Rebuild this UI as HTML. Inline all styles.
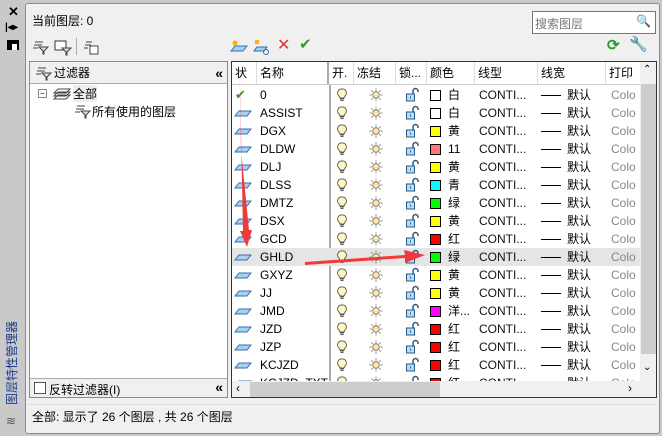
<!DOCTYPE html>
<html><head><meta charset="utf-8"><style>
*{margin:0;padding:0;box-sizing:border-box}
body{width:662px;height:436px;overflow:hidden;background:#c9c9c9;font-family:"Liberation Sans","Noto Sans CJK SC",sans-serif;font-size:12px;color:#000;position:relative}
.a{position:absolute}
#main{left:25px;top:3px;width:635px;height:431px;background:#f0f0f0;border:1px solid #8a8a8a;border-radius:3px}
.box{background:#fff;border:1px solid #828282}
.row{position:absolute;left:0;width:408px;height:18px;line-height:18px;white-space:nowrap}
.row span,.row svg{position:absolute;top:0}
.sw{position:absolute;top:4px;width:11px;height:11px;border:1px solid #000}
.n{left:28px}
.ly{left:2px}
.bulb{left:104px}
.sun{left:135px}
.lk{left:172px}
.cn{left:216px}
.lt{left:247px;color:#111}
.lw{left:309px}
.lw:before{content:"";display:inline-block;width:20px;border-top:1px solid #000;vertical-align:middle;margin-right:6px}
.pr{left:379px;color:#888}
.hd{position:absolute;top:0;height:22px;line-height:22px;border-right:1px solid #ddd;padding-left:3px}
</style></head><body>
<svg width="0" height="0" style="position:absolute">
 <symbol id="ly" viewBox="0 0 18 18"><path d="M5,7 L17,7 L13,12 L1,12 Z" fill="#a8d0f0" stroke="#3a6ea8"/></symbol>
 <symbol id="bu" viewBox="0 0 12 18"><path d="M6,3 a4,4 0 0 1 3,7 L8,12 L4,12 L3,10 a4,4 0 0 1 3,-7 Z" fill="#fff6c0" stroke="#555" stroke-width="0.9"/><path d="M4,13 H8 M4.5,14.5 H7.5" stroke="#555"/></symbol>
 <symbol id="su" viewBox="0 0 18 18"><circle cx="9" cy="9" r="3.3" fill="#ffe8a0" stroke="#666" stroke-width=".8"/><path d="M9,2.5V4.5M9,13.5V15.5M2.5,9H4.5M13.5,9H15.5M4.4,4.4L5.8,5.8M12.2,12.2L13.6,13.6M4.4,13.6L5.8,12.2M12.2,5.8L13.6,4.4" stroke="#888" stroke-width="1"/></symbol>
 <symbol id="lo" viewBox="0 0 18 18"><path d="M9,8 V5 a2.5,2.5 0 0 1 5,0 V6" fill="none" stroke="#2a5a8a" stroke-width="1.5"/><rect x="2.5" y="8" width="8" height="7" fill="#b8dcf4" stroke="#2a5a8a"/><path d="M6.5,10.5V12.5" stroke="#2a5a8a"/></symbol>
 <symbol id="fi" viewBox="0 0 18 18"><path d="M4,4 H12 M3,7 H11 M2,10 H7 M8,9 H17 L13,13 V16 H12 V13 Z" fill="#ddd" stroke="#444"/></symbol>
</svg>
<div class="a" style="left:8px;top:4px;font-weight:bold;font-size:13px">✕</div>
<div class="a" style="left:5px;top:22px;font-size:10px;font-weight:bold">|◂▸</div>
<div class="a" style="left:7px;top:40px;width:12px;height:10px;background:#000;border-top:3px solid #000"><div class="a" style="left:5px;top:1px;width:5px;height:6px;background:#fff"></div></div>
<div class="a" style="left:3px;top:405px;transform:rotate(-90deg);transform-origin:0 0;font-size:12px;color:#1a3a8a;white-space:nowrap">图层特性管理器</div>
<div class="a" style="left:6px;top:414px;color:#555;font-size:12px">≋</div>
<div id="main" class="a">
 <div class="a" style="left:6px;top:8px;font-size:12px">当前图层: 0</div>
 <div class="a box" style="left:506px;top:7px;width:124px;height:23px;border-color:#777"><span class="a" style="left:2px;top:3px;color:#777">搜索图层</span><span class="a" style="right:4px;top:2px;color:#555">🔍</span></div>
 <svg class="a" style="left:5px;top:34px" width="18" height="18"><use href="#fi"/></svg>
 <svg class="a" style="left:28px;top:34px" width="18" height="18"><rect x="1" y="3" width="11" height="9" fill="#fff" stroke="#333"/><path d="M8,10 H17 L13,14 V17 H12 V14 Z" fill="#ddd" stroke="#444"/></svg>
 <div class="a" style="left:50px;top:34px;width:1px;height:17px;background:#aaa"></div>
 <svg class="a" style="left:56px;top:34px" width="18" height="18"><path d="M4,4 H10 M3,7 H9 M2,10 H6" stroke="#444"/><rect x="8" y="8" width="8" height="8" fill="#fff" stroke="#444"/></svg>
 <svg class="a" style="left:204px;top:34px" width="18" height="18"><path d="M5,8 L17,8 L13,13 L1,13 Z" fill="#a8d0f0" stroke="#3a6ea8"/><circle cx="5" cy="5" r="2.5" fill="#ffb000"/></svg>
 <svg class="a" style="left:227px;top:34px" width="18" height="18"><rect x="2" y="2" width="4" height="4" fill="#ffb000"/><path d="M4,9 H14 L11,13 H1 Z" fill="#a8d0f0" stroke="#3a6ea8"/><circle cx="13" cy="14" r="2.5" fill="none" stroke="#3a6ea8"/></svg>
 <div class="a" style="left:251px;top:31px;color:#e03030;font-size:16px">✕</div>
 <div class="a" style="left:273px;top:31px;color:#2a9a2a;font-size:15px">✔</div>
 <div class="a" style="left:581px;top:32px;color:#2a9a2a;font-size:15px;font-weight:bold">⟳</div>
 <div class="a" style="left:603px;top:31px;color:#777;font-size:15px">🔧</div>
 <!-- filter panel -->
 <div class="a box" style="left:3px;top:57px;width:199px;height:337px;border-color:#8a8a8a">
  <div class="a" style="left:0;top:0;width:197px;height:22px;background:#f0f0f0;border-bottom:1px solid #aaa;line-height:22px"><svg class="a" style="left:4px;top:2px" width="18" height="18"><use href="#fi"/></svg><span class="a" style="left:24px;top:0">过滤器</span><span class="a" style="right:4px;top:0;font-weight:bold;font-size:14px">«</span></div>
  <div class="a" style="left:8px;top:27px;width:9px;height:9px;border:1px solid #888;font-size:8px;line-height:7px;text-align:center">−</div>
  <svg class="a" style="left:22px;top:22px" width="20" height="18"><path d="M6,5 H18 L14,9 H2 Z M6,8 H18 L14,12 H2 Z M6,11 H18 L14,15 H2 Z" fill="#fff" stroke="#444"/></svg>
  <div class="a" style="left:43px;top:23px;background:#eee">全部</div>
  <svg class="a" style="left:43px;top:40px" width="18" height="18"><use href="#fi"/></svg>
  <div class="a" style="left:62px;top:41px">所有使用的图层</div>
  <div class="a" style="left:0;top:316px;width:197px;height:19px;background:#f0f0f0;border-top:1px solid #aaa"><div class="a" style="left:4px;top:3px;width:12px;height:12px;border:1px solid #555;background:#fff"></div><span class="a" style="left:19px;top:2px">反转过滤器(I)</span><span class="a" style="right:4px;top:0;font-weight:bold;font-size:14px">«</span></div>
 </div>
 <!-- grid -->
 <div class="a box" style="left:205px;top:57px;width:426px;height:337px;border-color:#333;overflow:hidden">
  <div class="a" style="left:0;top:0;width:408px;height:23px;border-bottom:1px solid #ccc;background:#fff">
   <div class="hd" style="left:0;width:25px">状</div><div class="hd" style="left:25px;width:72px;border-right:2px solid #aaa">名称</div>
   <div class="hd" style="left:97px;width:25px">开.</div><div class="hd" style="left:122px;width:42px">冻结</div>
   <div class="hd" style="left:164px;width:31px">锁...</div><div class="hd" style="left:195px;width:48px">颜色</div>
   <div class="hd" style="left:243px;width:63px">线型</div><div class="hd" style="left:306px;width:68px">线宽</div>
   <div class="hd" style="left:374px;width:40px">打印</div>
  </div>
  <div class="a" style="left:97px;top:23px;width:2px;height:296px;background:#aaa"></div>
  <div class="a" style="left:408px;top:0;width:17px;height:319px;background:#f0f0f0"><div class="a" style="left:3px;top:2px;font-size:10px">⌃</div><div class="a" style="left:1px;top:22px;width:15px;height:270px;background:#cdcdcd"></div><div class="a" style="left:3px;top:300px;font-size:10px">⌄</div></div>
  <div class="a" style="left:0;top:319px;width:425px;height:17px;background:#f0f0f0"><span class="a" style="left:4px;top:0">‹</span><div class="a" style="left:18px;top:1px;width:190px;height:15px;background:#cdcdcd"></div><span class="a" style="left:396px;top:0">›</span></div>
  <div class="a" style="left:0;top:23px;width:408px;height:296px;overflow:hidden">
   <div class="row" style="top:1px"><span style="left:3px;color:#2a9a2a;font-size:13px">✔</span><span class="n">0</span><svg class="bulb" width="12" height="18"><use href="#bu"/></svg><svg class="sun" width="18" height="18"><use href="#su"/></svg><svg class="lk" width="18" height="18"><use href="#lo"/></svg><i class="sw" style="left:198px;background:#fff"></i><span class="cn">白</span><span class="lt">CONTI...</span><span class="lw">默认</span><span class="pr">Colo</span></div>
   <div class="row" style="top:19px"><svg class="ly" width="18" height="18"><use href="#ly"/></svg><span class="n">ASSIST</span><svg class="bulb" width="12" height="18"><use href="#bu"/></svg><svg class="sun" width="18" height="18"><use href="#su"/></svg><svg class="lk" width="18" height="18"><use href="#lo"/></svg><i class="sw" style="left:198px;background:#fff"></i><span class="cn">白</span><span class="lt">CONTI...</span><span class="lw">默认</span><span class="pr">Colo</span></div>
   <div class="row" style="top:37px"><svg class="ly" width="18" height="18"><use href="#ly"/></svg><span class="n">DGX</span><svg class="bulb" width="12" height="18"><use href="#bu"/></svg><svg class="sun" width="18" height="18"><use href="#su"/></svg><svg class="lk" width="18" height="18"><use href="#lo"/></svg><i class="sw" style="left:198px;background:#ff0"></i><span class="cn">黄</span><span class="lt">CONTI...</span><span class="lw">默认</span><span class="pr">Colo</span></div>
   <div class="row" style="top:55px"><svg class="ly" width="18" height="18"><use href="#ly"/></svg><span class="n">DLDW</span><svg class="bulb" width="12" height="18"><use href="#bu"/></svg><svg class="sun" width="18" height="18"><use href="#su"/></svg><svg class="lk" width="18" height="18"><use href="#lo"/></svg><i class="sw" style="left:198px;background:#f77"></i><span class="cn">11</span><span class="lt">CONTI...</span><span class="lw">默认</span><span class="pr">Colo</span></div>
   <div class="row" style="top:73px"><svg class="ly" width="18" height="18"><use href="#ly"/></svg><span class="n">DLJ</span><svg class="bulb" width="12" height="18"><use href="#bu"/></svg><svg class="sun" width="18" height="18"><use href="#su"/></svg><svg class="lk" width="18" height="18"><use href="#lo"/></svg><i class="sw" style="left:198px;background:#ff0"></i><span class="cn">黄</span><span class="lt">CONTI...</span><span class="lw">默认</span><span class="pr">Colo</span></div>
   <div class="row" style="top:91px"><svg class="ly" width="18" height="18"><use href="#ly"/></svg><span class="n">DLSS</span><svg class="bulb" width="12" height="18"><use href="#bu"/></svg><svg class="sun" width="18" height="18"><use href="#su"/></svg><svg class="lk" width="18" height="18"><use href="#lo"/></svg><i class="sw" style="left:198px;background:#0ff"></i><span class="cn">青</span><span class="lt">CONTI...</span><span class="lw">默认</span><span class="pr">Colo</span></div>
   <div class="row" style="top:109px"><svg class="ly" width="18" height="18"><use href="#ly"/></svg><span class="n">DMTZ</span><svg class="bulb" width="12" height="18"><use href="#bu"/></svg><svg class="sun" width="18" height="18"><use href="#su"/></svg><svg class="lk" width="18" height="18"><use href="#lo"/></svg><i class="sw" style="left:198px;background:#0f0"></i><span class="cn">绿</span><span class="lt">CONTI...</span><span class="lw">默认</span><span class="pr">Colo</span></div>
   <div class="row" style="top:127px"><svg class="ly" width="18" height="18"><use href="#ly"/></svg><span class="n">DSX</span><svg class="bulb" width="12" height="18"><use href="#bu"/></svg><svg class="sun" width="18" height="18"><use href="#su"/></svg><svg class="lk" width="18" height="18"><use href="#lo"/></svg><i class="sw" style="left:198px;background:#ff0"></i><span class="cn">黄</span><span class="lt">CONTI...</span><span class="lw">默认</span><span class="pr">Colo</span></div>
   <div class="row" style="top:145px"><svg class="ly" width="18" height="18"><use href="#ly"/></svg><span class="n">GCD</span><svg class="bulb" width="12" height="18"><use href="#bu"/></svg><svg class="sun" width="18" height="18"><use href="#su"/></svg><svg class="lk" width="18" height="18"><use href="#lo"/></svg><i class="sw" style="left:198px;background:#f00"></i><span class="cn">红</span><span class="lt">CONTI...</span><span class="lw">默认</span><span class="pr">Colo</span></div>
   <div class="row" style="top:163px;background:#e5e5e5"><svg class="ly" width="18" height="18"><use href="#ly"/></svg><span class="n">GHLD</span><svg class="bulb" width="12" height="18"><use href="#bu"/></svg><svg class="sun" width="18" height="18"><use href="#su"/></svg><svg class="lk" width="18" height="18"><use href="#lo"/></svg><i class="sw" style="left:198px;background:#0f0"></i><span class="cn">绿</span><span class="lt">CONTI...</span><span class="lw">默认</span><span class="pr">Colo</span></div>
   <div class="row" style="top:181px"><svg class="ly" width="18" height="18"><use href="#ly"/></svg><span class="n">GXYZ</span><svg class="bulb" width="12" height="18"><use href="#bu"/></svg><svg class="sun" width="18" height="18"><use href="#su"/></svg><svg class="lk" width="18" height="18"><use href="#lo"/></svg><i class="sw" style="left:198px;background:#ff0"></i><span class="cn">黄</span><span class="lt">CONTI...</span><span class="lw">默认</span><span class="pr">Colo</span></div>
   <div class="row" style="top:199px"><svg class="ly" width="18" height="18"><use href="#ly"/></svg><span class="n">JJ</span><svg class="bulb" width="12" height="18"><use href="#bu"/></svg><svg class="sun" width="18" height="18"><use href="#su"/></svg><svg class="lk" width="18" height="18"><use href="#lo"/></svg><i class="sw" style="left:198px;background:#ff0"></i><span class="cn">黄</span><span class="lt">CONTI...</span><span class="lw">默认</span><span class="pr">Colo</span></div>
   <div class="row" style="top:217px"><svg class="ly" width="18" height="18"><use href="#ly"/></svg><span class="n">JMD</span><svg class="bulb" width="12" height="18"><use href="#bu"/></svg><svg class="sun" width="18" height="18"><use href="#su"/></svg><svg class="lk" width="18" height="18"><use href="#lo"/></svg><i class="sw" style="left:198px;background:#f0f"></i><span class="cn">洋...</span><span class="lt">CONTI...</span><span class="lw">默认</span><span class="pr">Colo</span></div>
   <div class="row" style="top:235px"><svg class="ly" width="18" height="18"><use href="#ly"/></svg><span class="n">JZD</span><svg class="bulb" width="12" height="18"><use href="#bu"/></svg><svg class="sun" width="18" height="18"><use href="#su"/></svg><svg class="lk" width="18" height="18"><use href="#lo"/></svg><i class="sw" style="left:198px;background:#f00"></i><span class="cn">红</span><span class="lt">CONTI...</span><span class="lw">默认</span><span class="pr">Colo</span></div>
   <div class="row" style="top:253px"><svg class="ly" width="18" height="18"><use href="#ly"/></svg><span class="n">JZP</span><svg class="bulb" width="12" height="18"><use href="#bu"/></svg><svg class="sun" width="18" height="18"><use href="#su"/></svg><svg class="lk" width="18" height="18"><use href="#lo"/></svg><i class="sw" style="left:198px;background:#f00"></i><span class="cn">红</span><span class="lt">CONTI...</span><span class="lw">默认</span><span class="pr">Colo</span></div>
   <div class="row" style="top:271px"><svg class="ly" width="18" height="18"><use href="#ly"/></svg><span class="n">KCJZD</span><svg class="bulb" width="12" height="18"><use href="#bu"/></svg><svg class="sun" width="18" height="18"><use href="#su"/></svg><svg class="lk" width="18" height="18"><use href="#lo"/></svg><i class="sw" style="left:198px;background:#f00"></i><span class="cn">红</span><span class="lt">CONTI...</span><span class="lw">默认</span><span class="pr">Colo</span></div>
   <div class="row" style="top:289px"><svg class="ly" width="18" height="18"><use href="#ly"/></svg><span class="n">KCJZD_TXT</span><svg class="bulb" width="12" height="18"><use href="#bu"/></svg><svg class="sun" width="18" height="18"><use href="#su"/></svg><svg class="lk" width="18" height="18"><use href="#lo"/></svg><i class="sw" style="left:198px;background:#f00"></i><span class="cn">红</span><span class="lt">CONTI...</span><span class="lw">默认</span><span class="pr">Colo</span></div>
  </div>
 </div>
 <div class="a" style="left:2px;top:400px;width:629px;border-top:1px solid #ddd"></div>
 <div class="a" style="left:6px;top:404px">全部: 显示了 26 个图层 , 共 26 个图层</div>
</div>
<svg class="a" style="left:0;top:0" width="662" height="436">
 <path d="M239.5,60 L241,150 L249,230 L252,230 L247,247 L240,231 L243,231 Z" fill="#f03a3a"/>
 <path d="M305,262 L305,265 L405,258 L405,263 L425,255 L404,250 L405,255 Z" fill="#f03a3a"/>
</svg>
</body></html>
